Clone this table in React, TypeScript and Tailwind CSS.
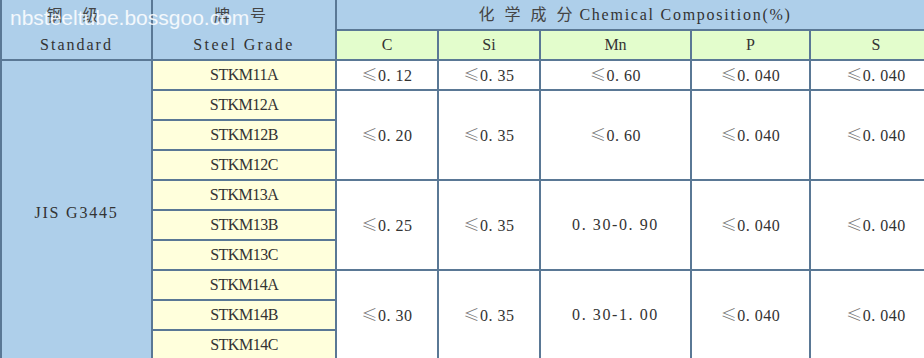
const serif = { fontFamily: '"Liberation Serif", "Noto Sans CJK SC", serif' };

const groups = [
  { grades: ["STKM11A"], c: "0. 12", si: "0. 35", mn: "0. 60", p: "0. 040", s: "0. 040" },
  { grades: ["STKM12A", "STKM12B", "STKM12C"], c: "0. 20", si: "0. 35", mn: "0. 60", p: "0. 040", s: "0. 040" },
  { grades: ["STKM13A", "STKM13B", "STKM13C"], c: "0. 25", si: "0. 35", mn: "0. 30-0. 90", p: "0. 040", s: "0. 040" },
  { grades: ["STKM14A", "STKM14B", "STKM14C"], c: "0. 30", si: "0. 35", mn: "0. 30-1. 00", p: "0. 040", s: "0. 040" },
];

const cell = "border-2 border-[#5a7895] text-center align-middle p-0";

function Val({ v }: { v: string }) {
  const range = v.includes("-");
  return (
    <span className={range ? "tracking-[1.6px]" : "tracking-[0.5px]"}>
      {!range && <span className="font-['Noto_Sans_CJK_SC'] font-light text-[#777]">≤</span>}
      {v}
    </span>
  );
}

export default function App() {
  return (
    <div className="relative w-[924px] h-[358px] overflow-hidden bg-white text-[16px] text-[#333]" style={serif}>
      <table className="table-fixed border-collapse w-[941px] -mt-[2px]">
        <colgroup>
          <col className="w-[151px]" />
          <col className="w-[184px]" />
          <col className="w-[102px]" />
          <col className="w-[102px]" />
          <col className="w-[151px]" />
          <col className="w-[119px]" />
          <col className="w-[132px]" />
        </colgroup>
        <thead>
          <tr className="h-[31px]">
            <th rowSpan={2} className={`${cell} bg-[#aecfea] font-normal leading-[29px]`}>
              <div className="tracking-[8px] text-[#444]">钢 级</div>
              <div className="tracking-[2px]">Standard</div>
            </th>
            <th rowSpan={2} className={`${cell} bg-[#aecfea] font-normal leading-[29px]`}>
              <div className="tracking-[8px] text-[#444]">牌 号</div>
              <div className="tracking-[2.4px]">Steel Grade</div>
            </th>
            <th colSpan={5} className={`${cell} bg-[#aecfea] font-normal pr-[8px]`}>
              <span className="tracking-[3px] text-[#444]">化 学 成 分</span>{" "}
              <span className="tracking-[1.75px]">Chemical Composition(%)</span>
            </th>
          </tr>
          <tr className="h-[30px]">
            {["C", "Si", "Mn", "P", "S"].map((h) => (
              <th key={h} className={`${cell} bg-[#e3fdcc] font-normal`}>{h}</th>
            ))}
          </tr>
        </thead>
        <tbody>
          {groups.map((g, gi) =>
            g.grades.map((grade, i) => (
              <tr key={grade} className="h-[30px]">
                {gi === 0 && i === 0 && (
                  <td rowSpan={10} className={`${cell} bg-[#aecfea] pt-[6px] tracking-[1.8px]`}>JIS G3445</td>
                )}
                <td className={`${cell} bg-[#ffffdc] tracking-[-0.5px]`}>{grade}</td>
                {i === 0 && (
                  <>
                    <td rowSpan={g.grades.length} className={cell}><Val v={g.c} /></td>
                    <td rowSpan={g.grades.length} className={cell}><Val v={g.si} /></td>
                    <td rowSpan={g.grades.length} className={cell}><Val v={g.mn} /></td>
                    <td rowSpan={g.grades.length} className={cell}><Val v={g.p} /></td>
                    <td rowSpan={g.grades.length} className={cell}><Val v={g.s} /></td>
                  </>
                )}
              </tr>
            ))
          )}
        </tbody>
      </table>
      <div
        className="absolute left-[10px] top-[7px] text-[21px] leading-none text-white/85 pointer-events-none"
        style={{ fontFamily: '"Liberation Sans", Arial, sans-serif' }}
      >
        nbsteeltube.bossgoo.com
      </div>
    </div>
  );
}
